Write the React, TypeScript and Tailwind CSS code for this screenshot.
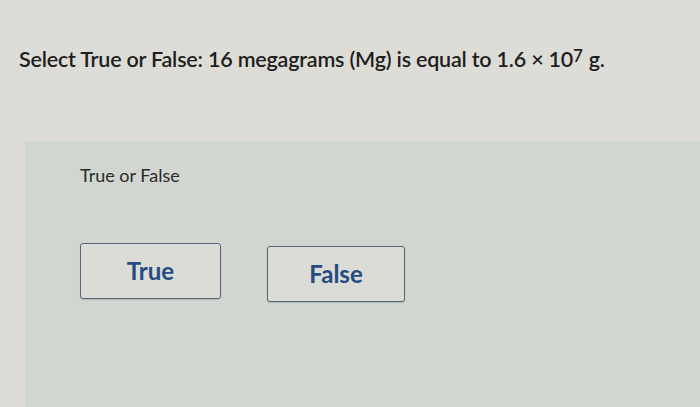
export default function App() {
  return (
    <div
      className="w-[700px] h-[407px] bg-[#dddcd6] overflow-hidden flex flex-col"
      style={{ fontFamily: "Lato, 'Open Sans', sans-serif" }}
    >
      <div className="pt-[44px] pl-[19px] h-[141px]">
        <p className="text-[21.5px] leading-[30px] text-[#1e1e1e] font-semibold tracking-[-0.2px]">
          Select True or False: 16 megagrams (Mg) is equal to 1.6 × 10
          <sup className="text-[17px] relative -top-[5px] pr-[6px]">7</sup>g.
        </p>
      </div>
      <div className="ml-[25px] flex-1 bg-[#d2d6d1] pl-[55px] pt-[22px]">
        <p className="text-[18px] leading-[24px] text-[#2a2a2a]">True or False</p>
        <div className="flex gap-[46px] mt-[56px] items-start">
          <button className="w-[141px] h-[56px] rounded-[3px] border border-[#5a6478] bg-[#dcdcd6] text-[24px] font-bold text-[#244b82] shadow-[0_1px_1px_rgba(0,0,0,0.15)]">
            True
          </button>
          <button className="mt-[3px] w-[138px] h-[56px] rounded-[3px] border border-[#5a6478] bg-[#dcdcd6] text-[24px] font-bold text-[#244b82] shadow-[0_1px_1px_rgba(0,0,0,0.15)]">
            False
          </button>
        </div>
      </div>
    </div>
  );
}
